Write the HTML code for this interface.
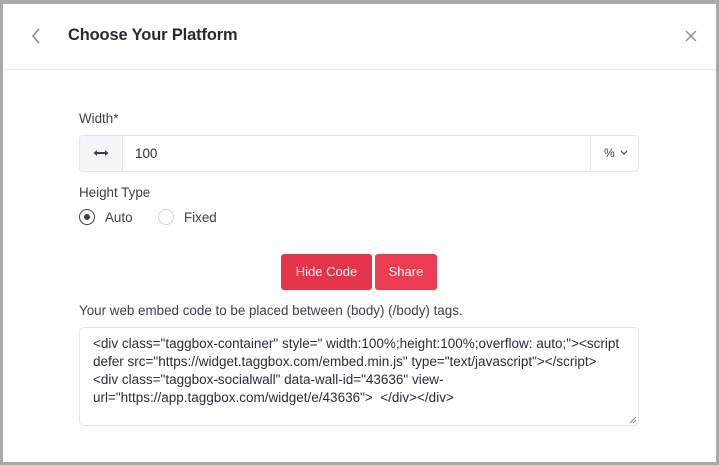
<!DOCTYPE html>
<html><head><meta charset="utf-8"><style>
*{margin:0;padding:0;box-sizing:border-box}
body{width:719px;height:465px;background:#a9a9a9;font-family:"Liberation Sans",sans-serif;position:relative;overflow:hidden}
.panel{position:absolute;left:3px;top:4px;width:713px;height:458px;background:#fff}
.a{position:absolute}
.hdr{left:0;top:65px;width:713px;height:1px;background:#e9eaee}
.title{left:65px;top:22px;font-size:16.4px;font-weight:bold;color:#262838;letter-spacing:-0.1px}
.lbl{font-size:13.4px;color:#3c3f4e}
.inp{left:76px;top:131px;width:560px;height:37px;border:1px solid #e3e5ea;border-radius:4px}
.add{left:0;top:0;width:43px;height:35px;background:#f4f5f8;border-right:1px solid #e3e5ea;border-radius:4px 0 0 4px}
.sel{left:510px;top:0;width:49px;height:35px;border-left:1px solid #e3e5ea}
.btn{height:36px;top:250px;border-radius:3px;color:#fff;font-size:13px;text-align:center;line-height:36px}
.ta{left:76px;top:323px;width:560px;height:99px;border:1px solid #e3e5ea;border-radius:5px}
.code{left:13px;top:7px;font-size:13.5px;line-height:18px;color:#2a2d3a;white-space:pre}
.radio{width:16px;height:16px;border-radius:50%;border:1px solid #d4d6dc}
</style></head><body>
<div class="panel">
<svg class="a" style="left:27px;top:23px" width="12" height="18" viewBox="0 0 12 18"><path d="M9 2 L3 9 L9 16" stroke="#8a8d98" stroke-width="1.6" fill="none"/></svg>
<div class="a title">Choose Your Platform</div>
<svg class="a" style="left:682px;top:26px" width="12" height="12" viewBox="0 0 12 12"><path d="M1 1L11 11M11 1L1 11" stroke="#8a8d98" stroke-width="1.4"/></svg>
<div class="a hdr"></div>
<div class="a lbl" style="left:76px;top:107px">Width*</div>
<div class="a inp">
 <div class="a add"><svg class="a" style="left:13px;top:12px" width="16" height="10" viewBox="0 0 16 10"><path d="M3 5H13" stroke="#3c3f4e" stroke-width="2"/><path d="M0.5 5L4 2V8Z M15.5 5L12 2V8Z" fill="#3c3f4e"/></svg></div>
 <div class="a" style="left:55px;top:10px;font-size:13.4px;color:#2a2d3a">100</div>
 <div class="a sel"><span class="a" style="left:13px;top:10px;font-size:12px;color:#3c3f4e">%</span><svg class="a" style="left:29px;top:14px" width="8" height="6" viewBox="0 0 8 6"><path d="M1 1L4 4L7 1" stroke="#3c3f4e" stroke-width="1.2" fill="none"/></svg></div>
</div>
<div class="a lbl" style="left:76px;top:181px">Height Type</div>
<div class="a radio" style="left:76px;top:205px;border-color:#3c3f4e"><div class="a" style="left:4px;top:4px;width:6px;height:6px;border-radius:50%;background:#3c3f4e"></div></div>
<div class="a lbl" style="left:102px;top:206px">Auto</div>
<div class="a radio" style="left:155px;top:205px"></div>
<div class="a lbl" style="left:181px;top:206px">Fixed</div>
<div class="a btn" style="left:278px;width:91px;background:#e3344a">Hide Code</div>
<div class="a btn" style="left:372px;width:62px;background:#ec3c52">Share</div>
<div class="a lbl" style="left:76px;top:299px">Your web embed code to be placed between (body) (/body) tags.</div>
<div class="a ta"><div class="a code">&lt;div class="taggbox-container" style=" width:100%;height:100%;overflow: auto;"&gt;&lt;script
defer src="https://widget.taggbox.com/embed.min.js" type="text/javascript"&gt;&lt;/script&gt;
&lt;div class="taggbox-socialwall" data-wall-id="43636" view-
url="https://app.taggbox.com/widget/e/43636"&gt;  &lt;/div&gt;&lt;/div&gt;</div>
<svg class="a" style="left:549px;top:88px" width="8" height="8" viewBox="0 0 8 8"><path d="M1 7L7 1M4 7L7 4" stroke="#888" stroke-width="1"/></svg></div>
</div>
</body></html>
